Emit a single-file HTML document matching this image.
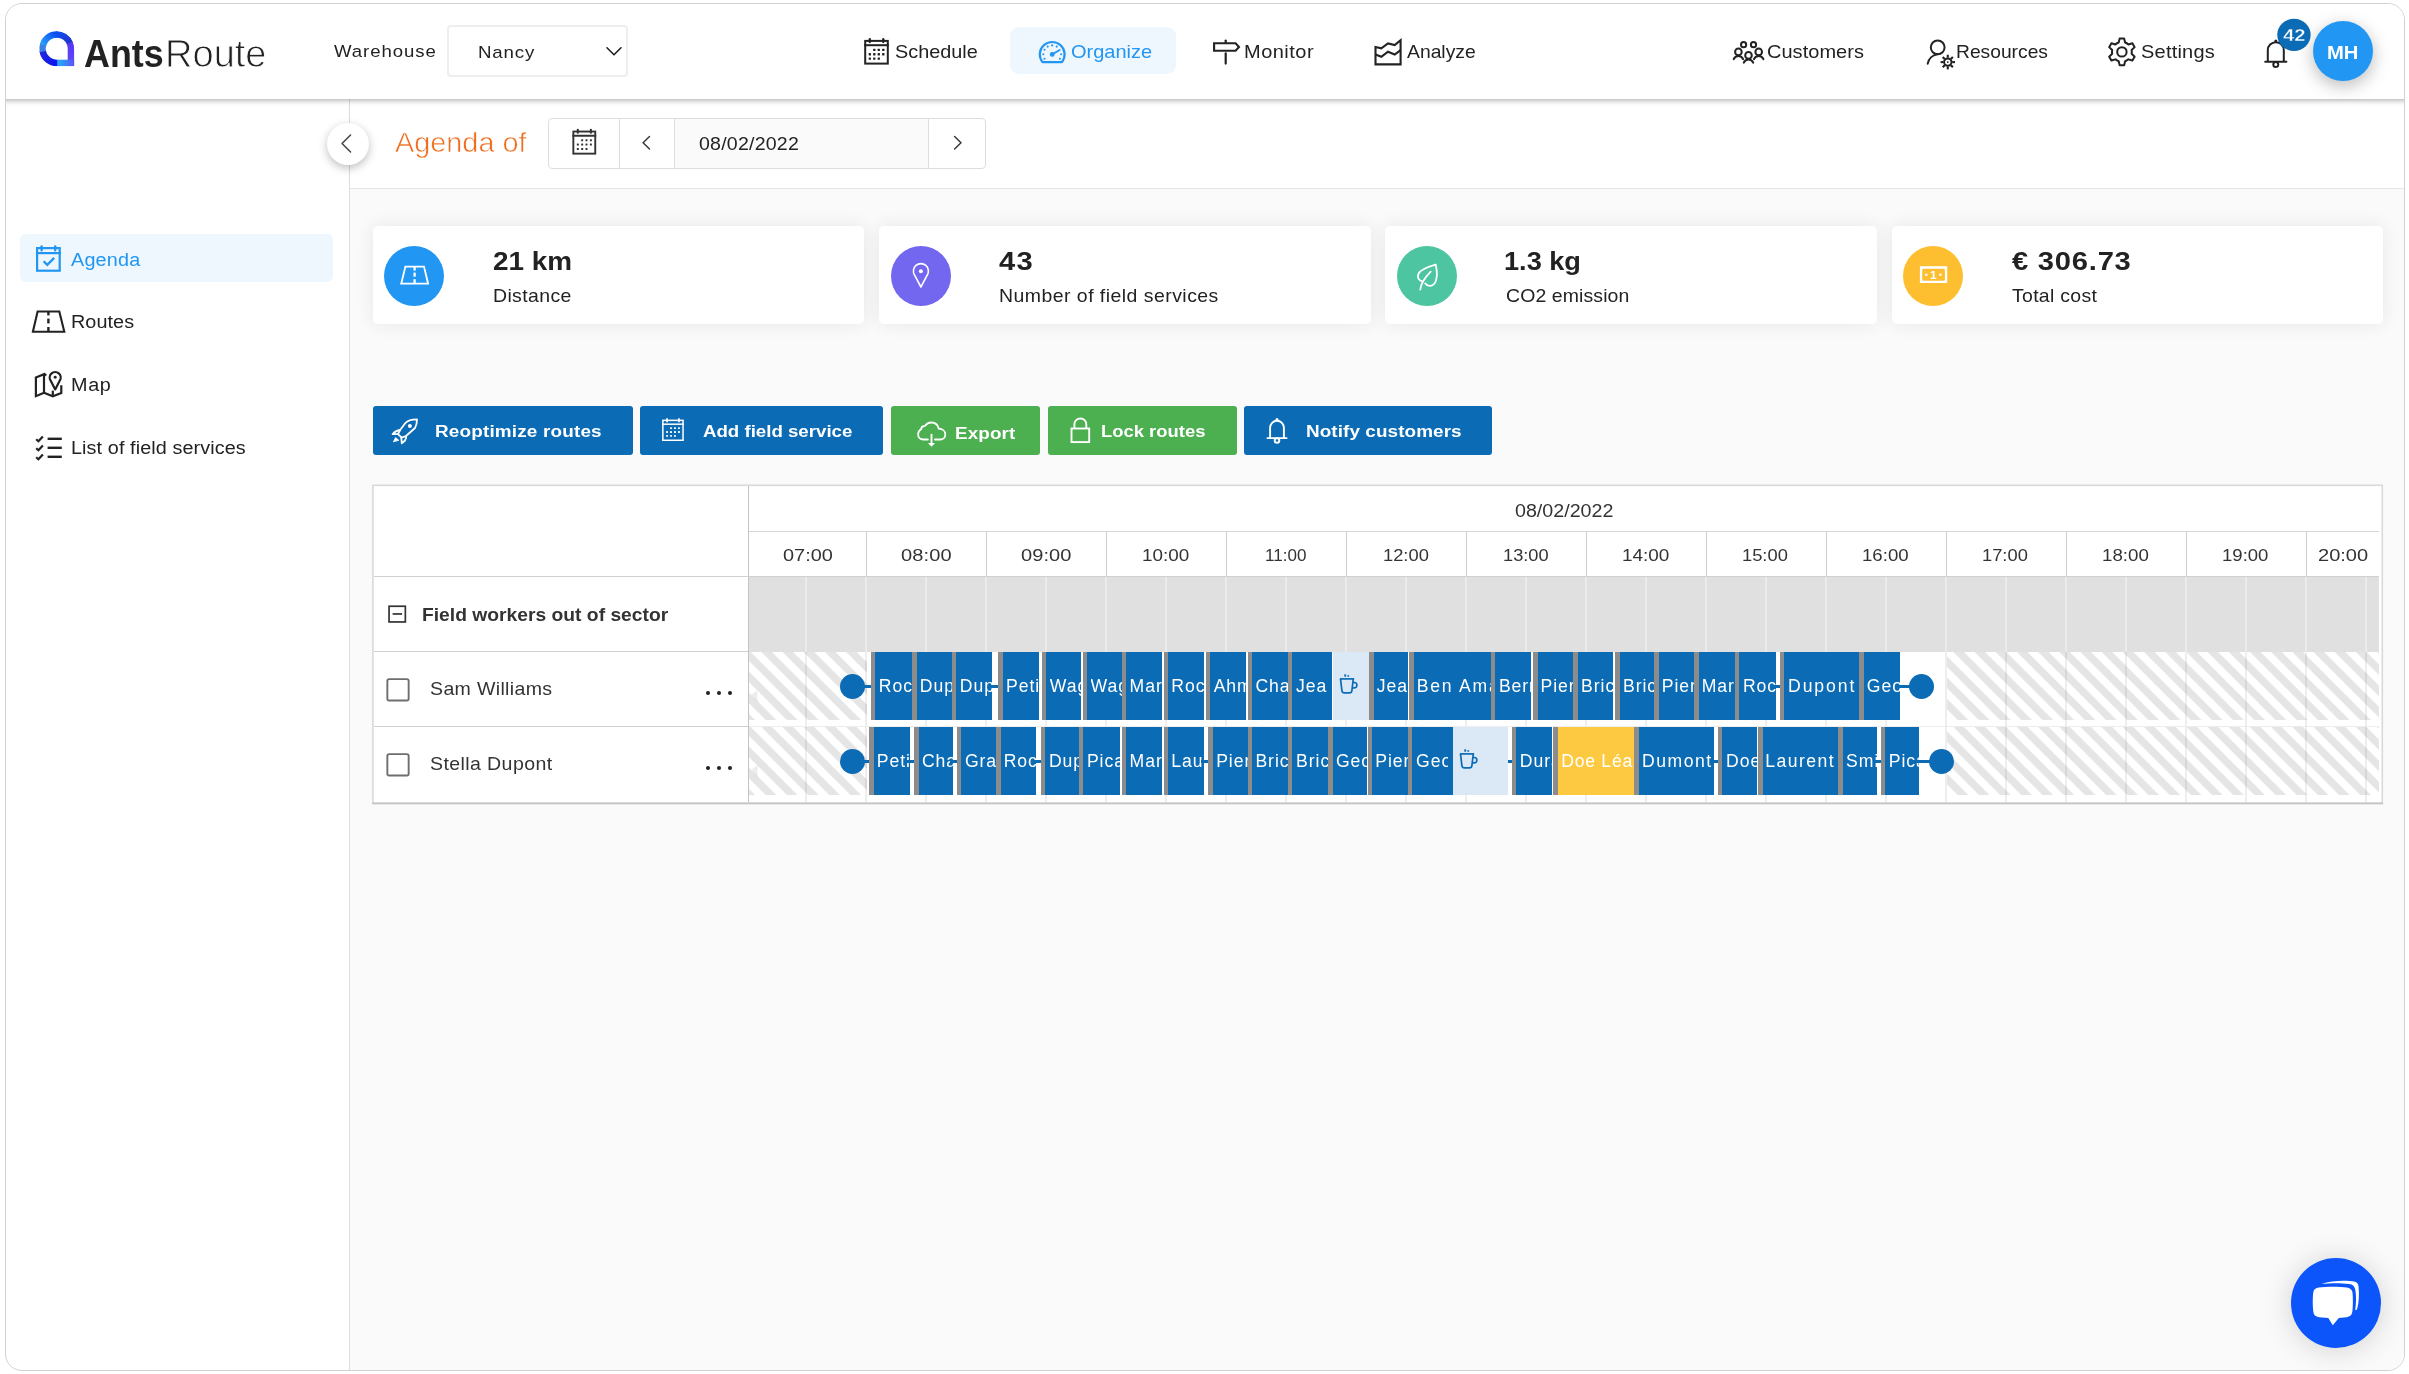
<!DOCTYPE html>
<html lang="en"><head><meta charset="utf-8"><title>AntsRoute - Agenda</title>
<style>
html,body{margin:0;padding:0;background:#fff;}
body{width:2409px;height:1374px;position:relative;overflow:hidden;font-family:"Liberation Sans",sans-serif;color:#222;}
.t{position:absolute;white-space:nowrap;line-height:1;transform-origin:0 50%;}
svg{position:absolute;overflow:visible;}

.frame{position:absolute;left:5px;top:3px;width:2400px;height:1368px;box-sizing:border-box;border:1px solid #d2d2d2;border-radius:17px;overflow:hidden;background:#fff;}
.abs{position:absolute;}
.frame>.abs{will-change:transform;}
header.w,nav,aside,main,section,ul,li{display:contents;}
button{border:0;padding:0;margin:0;background:none;font:inherit;color:inherit;display:block;}
a{color:inherit;text-decoration:none;display:block;}
.t{margin:0;font-weight:400;}
.thin1{-webkit-text-stroke:.9px #fff;}
.thin2{-webkit-text-stroke:.6px #fff;}
.semi{-webkit-text-stroke:.4px #0b6bb5;}
.task{position:absolute;top:0;height:68px;overflow:hidden;box-sizing:border-box;background:linear-gradient(90deg,#8c8c8c 4.5px,#0b6bb5 4.5px);color:#fff;font-size:17.6px;letter-spacing:.95px;line-height:69.8px;white-space:nowrap;padding:0 0 0 7.8px;}
.task b{display:block;overflow:hidden;font-weight:400;height:68px;}
.task.y{background:linear-gradient(90deg,#8c8c8c 4.5px,#fcc940 4.5px);}
.brk{position:absolute;top:0;height:68px;background:#dbe8f5;}
.lnk{position:absolute;height:3px;background:#0b6bb5;top:33.4px;}
.dot{position:absolute;width:25px;height:25px;border-radius:50%;background:#0b6bb5;top:21.8px;}
.card{background:#fff;border-radius:5px;box-shadow:0 0 18px rgba(40,40,70,.09);}
.circ{position:absolute;left:11.8px;top:19.6px;width:60px;height:60px;border-radius:50%;}

</style></head><body>
<div class="frame"><div class="abs" style="left:-6px;top:-4px;width:2409px;height:1374px;">
<div style="position:absolute;left:349px;top:188px;width:2056px;height:1190px;background:#fafafa;"></div>
<div style="position:absolute;left:348.7px;top:99px;width:1.5px;height:1280px;background:#dcdcdc;"></div>
<div style="position:absolute;left:350px;top:187.5px;width:2056px;height:1px;background:#e6e6e6;"></div>
<header style="position:absolute;left:0px;top:0px;width:2409px;height:99px;background:#fff;box-shadow:0 1px 6px rgba(0,0,0,.36);">
<a title="AntsRoute" style="position:absolute;left:36px;top:28px;width:232px;height:44px;">
<svg style="left:0px;top:0px" width="42" height="42" viewBox="36 28 42 42" ><defs>
<linearGradient id="lg1" gradientUnits="userSpaceOnUse" x1="42" y1="50" x2="57" y2="34"><stop offset="0" stop-color="#2fb4f9"/><stop offset="1" stop-color="#0b4cf0"/></linearGradient>
<linearGradient id="lg2" gradientUnits="userSpaceOnUse" x1="57" y1="34" x2="70" y2="43"><stop offset="0" stop-color="#0d50f4"/><stop offset="1" stop-color="#2234c6"/></linearGradient>
<linearGradient id="lg3" gradientUnits="userSpaceOnUse" x1="71" y1="42" x2="71" y2="66"><stop offset="0" stop-color="#5a33f6"/><stop offset="1" stop-color="#5c4df7"/></linearGradient>
<linearGradient id="lg4" gradientUnits="userSpaceOnUse" x1="74" y1="63" x2="60" y2="63"><stop offset="0" stop-color="#5a52f7"/><stop offset="1" stop-color="#2aa4f9"/></linearGradient>
<linearGradient id="lg5" gradientUnits="userSpaceOnUse" x1="60" y1="63" x2="43" y2="53"><stop offset="0" stop-color="#0812f2"/><stop offset="1" stop-color="#2026e0"/></linearGradient>
</defs><path d="M58.18 62.82 A14.2 14.2 0 0 1 42.64 50.68" fill="none" stroke="url(#lg5)" stroke-width="6.4"/><path d="M42.81 51.65 A14.2 14.2 0 0 1 43.36 43.84" fill="none" stroke="#3c7fe2" stroke-width="6.4"/><path d="M43.05 44.79 A14.2 14.2 0 0 1 57.20 34.51" fill="none" stroke="url(#lg1)" stroke-width="6.4"/><path d="M56.20 34.51 A14.2 14.2 0 0 1 69.87 43.38" fill="none" stroke="url(#lg2)" stroke-width="6.4"/><path d="M69.67 42.92 A14.2 14.2 0 0 1 70.90 50.70 L70.90 66.1" fill="none" stroke="url(#lg3)" stroke-width="6.4"/><path d="M74.1 62.90 L57.20 62.90" fill="none" stroke="url(#lg4)" stroke-width="6.4"/></svg>
<b class="t" style="left:48.20px;top:4px;font-size:38.4px;line-height:43px;transform:scaleX(0.9338);font-weight:700;">Ants</b>
<span class="t thin1" style="left:128.83px;top:4px;font-size:38.4px;line-height:43px;transform:scaleX(0.9909);">Route</span>
</a>
<label class="t" style="left:333.90px;top:42px;font-size:16.9px;line-height:19px;letter-spacing:0.853px;transform:scaleX(1.1000);">Warehouse</label>
<div role="combobox" style="position:absolute;left:447px;top:25px;width:181px;height:52px;box-sizing:border-box;border:2px solid #eeeeee;border-radius:4px;background:#fff;">
<span class="t" style="left:28.60px;top:16px;font-size:17px;line-height:19px;letter-spacing:0.760px;transform:scaleX(1.1000);">Nancy</span>
<svg style="left:154px;top:17px" width="22" height="14" viewBox="603 44 22 14" ><path d="M607.0 47.8 L614 54.8 L621.0 47.8" fill="none" stroke="#222" stroke-width="1.6" stroke-linecap="round" stroke-linejoin="round"/></svg>
</div>
<nav>
<a style="position:absolute;left:850px;top:27px;width:142px;height:47.4px;">
<svg style="left:12px;top:8px" width="30" height="32" viewBox="862 35 30 32" ><rect x="865.2" y="40.9" width="22.59999999999991" height="22.699999999999996" fill="none" stroke="#222" stroke-width="2.0" /><line x1="864.2" y1="45.210499999999996" x2="888.8" y2="45.210499999999996" fill="none" stroke="#222" stroke-width="2.0" /><line x1="869.8088" y1="39.159" x2="869.8088" y2="42.123" fill="none" stroke="#222" stroke-width="2.3" stroke-linecap="round"/><line x1="883.2896" y1="39.159" x2="883.2896" y2="42.123" fill="none" stroke="#222" stroke-width="2.3" stroke-linecap="round"/><rect x="873.14" y="48.63" width="2.3" height="2.3" rx="0.5" fill="#222"/><rect x="877.64" y="48.63" width="2.3" height="2.3" rx="0.5" fill="#222"/><rect x="882.14" y="48.63" width="2.3" height="2.3" rx="0.5" fill="#222"/><rect x="868.66" y="53.08" width="2.3" height="2.3" rx="0.5" fill="#222"/><rect x="873.14" y="53.08" width="2.3" height="2.3" rx="0.5" fill="#222"/><rect x="877.64" y="53.08" width="2.3" height="2.3" rx="0.5" fill="#222"/><rect x="882.14" y="53.08" width="2.3" height="2.3" rx="0.5" fill="#222"/><rect x="868.66" y="57.57" width="2.3" height="2.3" rx="0.5" fill="#222"/><rect x="873.14" y="57.57" width="2.3" height="2.3" rx="0.5" fill="#222"/><rect x="877.64" y="57.57" width="2.3" height="2.3" rx="0.5" fill="#222"/></svg>
<span class="t" style="left:45.30px;top:15px;font-size:18.2px;line-height:20px;transform:scaleX(1.0908);">Schedule</span>
</a>
<a class="on" style="position:absolute;left:1010.2px;top:27px;width:165.6px;height:47.4px;background:#eef6fe;border-radius:9px;">
<svg style="left:25.8px;top:11px" width="32" height="28" viewBox="1036 38 32 28" ><path d="M1042.5 62.1 A12.4 12.4 0 1 1 1061.9 62.1 Z" fill="none" stroke="#2196f3" stroke-width="2.2" stroke-linejoin="round"/><circle cx="1043.3" cy="54.3" r="1.05" fill="#2196f3"/><circle cx="1044.5" cy="49.8" r="1.05" fill="#2196f3"/><circle cx="1047.7" cy="46.6" r="1.05" fill="#2196f3"/><circle cx="1052.2" cy="45.4" r="1.05" fill="#2196f3"/><circle cx="1056.7" cy="46.6" r="1.05" fill="#2196f3"/><circle cx="1061.1" cy="54.3" r="1.05" fill="#2196f3"/><circle cx="1044.5" cy="58.7" r="1.05" fill="#2196f3"/><circle cx="1059.9" cy="58.7" r="1.05" fill="#2196f3"/><circle cx="1052.2" cy="54.4" r="2.4" fill="#2196f3"/><line x1="1052.2" y1="54.4" x2="1059.7" y2="50" fill="none" stroke="#2196f3" stroke-width="1.8" stroke-linecap="round"/></svg>
<span class="t" style="left:60.60px;top:15px;font-size:18.2px;line-height:20px;transform:scaleX(1.1000);color:#2196f3;">Organize</span>
</a>
<a style="position:absolute;left:1198px;top:27px;width:130px;height:47.4px;">
<svg style="left:12px;top:10px" width="34" height="30" viewBox="1210 37 34 30" ><path d="M1214.1 43.2 H1235.6 L1239 47 L1235.6 50.8 H1214.1 Z" fill="none" stroke="#222" stroke-width="2.1" stroke-linejoin="miter"/><line x1="1225.7" y1="40.6" x2="1225.7" y2="42.5" fill="none" stroke="#222" stroke-width="2.2" stroke-linecap="round"/><line x1="1225.7" y1="53.4" x2="1225.7" y2="63.6" fill="none" stroke="#222" stroke-width="2.2" stroke-linecap="round"/></svg>
<span class="t" style="left:46.20px;top:15px;font-size:18.2px;line-height:20px;letter-spacing:0.432px;transform:scaleX(1.1000);">Monitor</span>
</a>
<a style="position:absolute;left:1360px;top:27px;width:130px;height:47.4px;">
<svg style="left:12px;top:9px" width="33" height="32" viewBox="1372 36 33 32" ><path d="M1375.5 64.4 H1400.6 V40.3 L1394.7 45 L1388 43.5 L1381.3 48.3 L1375.5 47 Z" fill="none" stroke="#222" stroke-width="2.1" /><path d="M1375.5 54.5 L1381.3 56.8 L1388 51.7 L1394.7 54.5 L1400.6 50.2" fill="none" stroke="#222" stroke-width="2.1" /></svg>
<span class="t" style="left:46.80px;top:15px;font-size:18.2px;line-height:20px;transform:scaleX(1.0621);">Analyze</span>
</a>
</nav>
<nav>
<a style="position:absolute;left:1720px;top:27px;width:158px;height:47.4px;">
<svg style="left:10px;top:12px" width="38" height="27" viewBox="1730 39 38 27" ><circle cx="1743.6" cy="44.7" r="2.6" fill="none" stroke="#222" stroke-width="2.0" stroke-linecap="round"/><circle cx="1753.5" cy="44.7" r="2.6" fill="none" stroke="#222" stroke-width="2.0" stroke-linecap="round"/><circle cx="1738.4" cy="51.9" r="3.3" fill="none" stroke="#222" stroke-width="2.0" stroke-linecap="round"/><path d="M1733.7 59.199999999999996 A5 5 0 0 1 1743.1000000000001 59.199999999999996" fill="none" stroke="#222" stroke-width="2.0" stroke-linecap="round"/><circle cx="1748.5" cy="55.4" r="3.3" fill="none" stroke="#222" stroke-width="2.0" stroke-linecap="round"/><path d="M1743.8 62.699999999999996 A5 5 0 0 1 1753.2 62.699999999999996" fill="none" stroke="#222" stroke-width="2.0" stroke-linecap="round"/><circle cx="1758.7" cy="51.9" r="3.3" fill="none" stroke="#222" stroke-width="2.0" stroke-linecap="round"/><path d="M1754.0 59.199999999999996 A5 5 0 0 1 1763.4 59.199999999999996" fill="none" stroke="#222" stroke-width="2.0" stroke-linecap="round"/></svg>
<span class="t" style="left:47.30px;top:15px;font-size:18.2px;line-height:20px;letter-spacing:0.021px;transform:scaleX(1.1000);">Customers</span>
</a>
<a style="position:absolute;left:1912px;top:27px;width:150px;height:47.4px;">
<svg style="left:12px;top:11px" width="34" height="34" viewBox="1924 38 34 34" ><circle cx="1937.7" cy="47.3" r="6.9" fill="none" stroke="#222" stroke-width="2.0" stroke-linecap="round"/><path d="M1927.7 63.7 A11.5 11.5 0 0 1 1937.4 54.3" fill="none" stroke="#222" stroke-width="2.0" stroke-linecap="round"/><circle cx="1947.8" cy="62.1" r="3.7" fill="none" stroke="#222" stroke-width="2.0" /><circle cx="1947.8" cy="62.1" r="0.95" fill="#222"/><line x1="1952.20" y1="62.10" x2="1955.00" y2="62.10" fill="none" stroke="#222" stroke-width="2.1" /><line x1="1950.91" y1="65.21" x2="1952.89" y2="67.26" fill="none" stroke="#222" stroke-width="2.1" /><line x1="1947.80" y1="66.50" x2="1947.80" y2="69.40" fill="none" stroke="#222" stroke-width="2.1" /><line x1="1944.69" y1="65.21" x2="1942.71" y2="67.26" fill="none" stroke="#222" stroke-width="2.1" /><line x1="1943.40" y1="62.10" x2="1940.60" y2="62.10" fill="none" stroke="#222" stroke-width="2.1" /><line x1="1944.69" y1="58.99" x2="1942.71" y2="56.94" fill="none" stroke="#222" stroke-width="2.1" /><line x1="1947.80" y1="57.70" x2="1947.80" y2="54.80" fill="none" stroke="#222" stroke-width="2.1" /><line x1="1950.91" y1="58.99" x2="1952.89" y2="56.94" fill="none" stroke="#222" stroke-width="2.1" /></svg>
<span class="t" style="left:44.34px;top:15px;font-size:18.2px;line-height:20px;transform:scaleX(1.0578);">Resources</span>
</a>
<a style="position:absolute;left:2094px;top:27px;width:134px;height:47.4px;">
<svg style="left:11px;top:8px" width="34" height="34" viewBox="2105 35 34 34" ><path d="M2118.68 42.54 L2119.66 38.49 L2124.14 38.49 L2125.12 42.54 A9.9 9.9 0 0 1 2128.39 44.43 L2132.39 43.25 L2134.64 47.14 L2131.62 50.01 A9.9 9.9 0 0 1 2131.62 53.79 L2134.64 56.66 L2132.39 60.55 L2128.39 59.37 A9.9 9.9 0 0 1 2125.12 61.26 L2124.14 65.31 L2119.66 65.31 L2118.68 61.26 A9.9 9.9 0 0 1 2115.41 59.37 L2111.41 60.55 L2109.16 56.66 L2112.18 53.79 A9.9 9.9 0 0 1 2112.18 50.01 L2109.16 47.14 L2111.41 43.25 L2115.41 44.43 A9.9 9.9 0 0 1 2118.68 42.54 Z" fill="none" stroke="#222" stroke-width="2.0" stroke-linejoin="round"/><circle cx="2121.9" cy="51.9" r="4.7" fill="none" stroke="#222" stroke-width="2.0" /></svg>
<span class="t" style="left:46.80px;top:15px;font-size:18.2px;line-height:20px;letter-spacing:0.197px;transform:scaleX(1.1000);">Settings</span>
</a>
</nav>
<button title="Account" style="position:absolute;left:2313px;top:21px;width:60px;height:60px;border-radius:50%;background:#2196f3;box-shadow:0 5px 17px rgba(0,0,0,.27);">
<span class="t" style="left:14.46px;top:22px;font-size:17.8px;line-height:20px;transform:scaleX(1.1390);font-weight:700;color:#fff;">MH</span>
</button>
<button title="Notifications" style="position:absolute;left:2258px;top:16px;width:54px;height:56px;">
<svg style="left:2px;top:20px" width="32" height="34" viewBox="2260 36 32 34" ><path d="M2267.8 61.8 V50.2 A8.0 8.0 0 0 1 2283.8 50.2 V61.8" fill="none" stroke="#222" stroke-width="2.0" /><line x1="2265.2000000000003" y1="61.8" x2="2286.4" y2="61.8" fill="none" stroke="#222" stroke-width="2.0" stroke-linecap="round"/><circle cx="2275.8" cy="64.39999999999999" r="2.5" fill="none" stroke="#222" stroke-width="2.0" /><circle cx="2275.8" cy="41.0" r="1.5" fill="#222"/></svg>
<svg style="left:18px;top:1px" width="36" height="36" viewBox="2276 17 36 36" ><ellipse cx="2293.95" cy="34.85" rx="16.7" ry="16.1" fill="#0b6bb5"/></svg>
<span class="t semi" style="left:24.80px;top:10px;font-size:17px;line-height:19px;transform:scaleX(1.1921);font-weight:700;color:#fff;">42</span>
</button>
</header>
<section>
<button title="Collapse menu" style="position:absolute;left:327px;top:122.5px;width:42px;height:42px;border-radius:50%;background:#fff;box-shadow:0 3px 10px rgba(0,0,0,.26);">
<svg style="left:11px;top:9.5px" width="18" height="24" viewBox="338 132 18 24" ><path d="M350.55 135.0 L342.05 143.5 L350.55 152.0" fill="none" stroke="#444" stroke-width="1.5" stroke-linecap="round" stroke-linejoin="round"/></svg>
</button>
<h1 class="t thin2" style="left:394.80px;top:127px;font-size:27.1px;line-height:31px;transform:scaleX(1.0644);color:#ee6c1c;">Agenda of</h1>
<div class="datepick" style="position:absolute;left:548.3px;top:118px;width:437.4px;height:50.6px;box-sizing:border-box;border:1px solid #dedede;border-radius:4px;background:#fff;overflow:hidden;">
<div class="abs" style="left:69.7px;top:0;width:1px;height:50px;background:#dedede"></div><div class="abs" style="left:124.9px;top:0;width:255.3px;height:50px;background:#fafafa;border-left:1px solid #dedede;border-right:1px solid #dedede;box-sizing:border-box"></div>
<button title="Calendar" style="position:absolute;left:0px;top:0px;width:70px;height:48.6px;">
<svg style="left:20.7px;top:7px" width="29" height="31" viewBox="570 126 29 31" ><rect x="573.35" y="131.54999999999998" width="21.90000000000007" height="22.1" fill="none" stroke="#333" stroke-width="1.9" /><line x1="572.4" y1="135.76" x2="596.2" y2="135.76" fill="none" stroke="#333" stroke-width="1.9" /><line x1="577.8264" y1="129.88" x2="577.8264" y2="132.76" fill="none" stroke="#333" stroke-width="2.1849999999999996" stroke-linecap="round"/><line x1="590.8688000000001" y1="129.88" x2="590.8688000000001" y2="132.76" fill="none" stroke="#333" stroke-width="2.1849999999999996" stroke-linecap="round"/><rect x="581.16" y="139.20" width="2.0" height="2.0" rx="0.5" fill="#333"/><rect x="585.51" y="139.20" width="2.0" height="2.0" rx="0.5" fill="#333"/><rect x="589.87" y="139.20" width="2.0" height="2.0" rx="0.5" fill="#333"/><rect x="576.83" y="143.52" width="2.0" height="2.0" rx="0.5" fill="#333"/><rect x="581.16" y="143.52" width="2.0" height="2.0" rx="0.5" fill="#333"/><rect x="585.51" y="143.52" width="2.0" height="2.0" rx="0.5" fill="#333"/><rect x="589.87" y="143.52" width="2.0" height="2.0" rx="0.5" fill="#333"/><rect x="576.83" y="147.89" width="2.0" height="2.0" rx="0.5" fill="#333"/><rect x="581.16" y="147.89" width="2.0" height="2.0" rx="0.5" fill="#333"/><rect x="585.51" y="147.89" width="2.0" height="2.0" rx="0.5" fill="#333"/></svg>
</button>
<button title="Previous day" style="position:absolute;left:71px;top:0px;width:54px;height:48.6px;">
<svg style="left:17.7px;top:14px" width="16" height="20" viewBox="638 133 16 20" ><path d="M649.5 136.60000000000002 L643.0999999999999 142.8 L649.5 149.0" fill="none" stroke="#333" stroke-width="1.4" stroke-linecap="round" stroke-linejoin="round"/></svg>
</button>
<span class="t" style="left:150.10px;top:15px;font-size:17.8px;line-height:20px;letter-spacing:0.190px;transform:scaleX(1.1000);">08/02/2022</span>
<button title="Next day" style="position:absolute;left:380.7px;top:0px;width:54px;height:48.6px;">
<svg style="left:20px;top:14px" width="16" height="20" viewBox="950 133 16 20" ><path d="M954.5999999999999 136.60000000000002 L961.0 142.8 L954.5999999999999 149.0" fill="none" stroke="#333" stroke-width="1.4" stroke-linecap="round" stroke-linejoin="round"/></svg>
</button>
</div>
</section>
<aside>
<nav>
<a class="on" style="position:absolute;left:20px;top:234px;width:313px;height:48px;background:#eef6fe;border-radius:6px;">
<svg style="left:13px;top:9px" width="31" height="31" viewBox="33 243 31 31" ><rect x="37.1" y="248.1" width="22.6" height="22.6" fill="none" stroke="#2196f3" stroke-width="2.2" /><line x1="36" y1="253.1" x2="60.8" y2="253.1" fill="none" stroke="#2196f3" stroke-width="2.2" /><line x1="41.6" y1="246.3" x2="41.6" y2="250.4" fill="none" stroke="#2196f3" stroke-width="2.3" stroke-linecap="round"/><line x1="55.2" y1="246.3" x2="55.2" y2="250.4" fill="none" stroke="#2196f3" stroke-width="2.3" stroke-linecap="round"/><path d="M43.6 261.2 L47.3 264.8 L54.2 257.9" fill="none" stroke="#2196f3" stroke-width="2.3" /></svg>
<span class="t" style="left:51.00px;top:16px;font-size:18px;line-height:20px;letter-spacing:0.172px;transform:scaleX(1.1000);color:#2196f3;">Agenda</span>
</a>
<a style="position:absolute;left:20px;top:297px;width:313px;height:48px;">
<svg style="left:9px;top:11px" width="40" height="27" viewBox="29 308 40 27" ><path d="M37.6 311.5 H59.3 L64.3 331.8 H32.9 Z" fill="none" stroke="#222" stroke-width="2.1" /><line x1="48.4" y1="311.5" x2="48.4" y2="315.4" fill="none" stroke="#222" stroke-width="2.4" /><line x1="48.4" y1="318.6" x2="48.4" y2="323.4" fill="none" stroke="#222" stroke-width="2.4" /><line x1="48.4" y1="327" x2="48.4" y2="331.8" fill="none" stroke="#222" stroke-width="2.4" /></svg>
<span class="t" style="left:50.50px;top:15px;font-size:18px;line-height:20px;letter-spacing:0.066px;transform:scaleX(1.1000);">Routes</span>
</a>
<a style="position:absolute;left:20px;top:360px;width:313px;height:48px;">
<svg style="left:12px;top:8px" width="34" height="32" viewBox="32 368 34 32" ><path d="M35.9 377.4 L44 374.2 V392.8 L35.9 396.2 Z" fill="none" stroke="#222" stroke-width="2.2" stroke-linejoin="miter"/><path d="M44 374.2 L46.4 375.1" fill="none" stroke="#222" stroke-width="2.2" stroke-linejoin="miter"/><path d="M44 392.8 L52.8 396.3 L61.3 392.9 V385.2" fill="none" stroke="#222" stroke-width="2.2" stroke-linejoin="miter"/><path d="M52.8 390.6 V396.3" fill="none" stroke="#222" stroke-width="2.2" stroke-linejoin="miter"/><path d="M55.2 389.4 L50.6 380.6 A5.5 5.5 0 1 1 59.8 380.6 Z" fill="none" stroke="#222" stroke-width="2.2" stroke-linejoin="round"/><circle cx="55.2" cy="377.3" r="1.45" fill="#222"/></svg>
<span class="t" style="left:50.50px;top:15px;font-size:18px;line-height:20px;letter-spacing:0.588px;transform:scaleX(1.1000);">Map</span>
</a>
<a style="position:absolute;left:20px;top:423px;width:313px;height:48px;">
<svg style="left:13px;top:10px" width="32" height="30" viewBox="33 433 32 30" ><line x1="47.6" y1="438.8" x2="61.8" y2="438.8" fill="none" stroke="#222" stroke-width="2.4" /><path d="M36.2 439.3 L38.4 441.3 L42.9 436.5" fill="none" stroke="#222" stroke-width="2.2" /><line x1="47.6" y1="447.8" x2="61.8" y2="447.8" fill="none" stroke="#222" stroke-width="2.4" /><path d="M36.2 448.3 L38.4 450.3 L42.9 445.5" fill="none" stroke="#222" stroke-width="2.2" /><line x1="47.6" y1="456.8" x2="61.8" y2="456.8" fill="none" stroke="#222" stroke-width="2.4" /><path d="M36.2 457.3 L38.4 459.3 L42.9 454.5" fill="none" stroke="#222" stroke-width="2.2" /></svg>
<span class="t" style="left:50.50px;top:15px;font-size:18px;line-height:20px;letter-spacing:0.084px;transform:scaleX(1.1000);">List of field services</span>
</a>
</nav>
</aside>
<section>
<div class="card" style="position:absolute;left:372.5px;top:226px;width:491.5px;height:98px;">
<div class="circ" style="background:#2196f3"></div>
<svg style="left:25.5px;top:36px" width="34" height="26" viewBox="398 262 34 26" ><path d="M405.4 266.6 H424 L428.1 283.7 H401.2 Z" fill="none" stroke="#fff" stroke-width="1.8" /><line x1="414.6" y1="266.6" x2="414.6" y2="270.6" fill="none" stroke="#fff" stroke-width="2.3" /><line x1="414.6" y1="272.6" x2="414.6" y2="276.7" fill="none" stroke="#fff" stroke-width="2.3" /><line x1="414.6" y1="279.2" x2="414.6" y2="283.7" fill="none" stroke="#fff" stroke-width="2.3" /></svg>
<strong class="t" style="left:120.40px;top:20px;font-size:26.5px;line-height:30px;transform:scaleX(1.0520);font-weight:700;">21 km</strong>
<span class="t" style="left:120.30px;top:60px;font-size:17.7px;line-height:20px;letter-spacing:0.341px;transform:scaleX(1.1000);">Distance</span>
</div>
<div class="card" style="position:absolute;left:879.2px;top:226px;width:491.5px;height:98px;">
<div class="circ" style="background:#7367f0"></div>
<svg style="left:30.8px;top:34px" width="22" height="30" viewBox="910 260 22 30" ><path d="M920.9 287 L914.6 275.2 A7.5 7.5 0 1 1 927.2 275.2 Z" fill="none" stroke="#fff" stroke-width="1.6" stroke-linejoin="round"/><circle cx="920.9" cy="271.2" r="2" fill="#fff"/></svg>
<strong class="t" style="left:120.30px;top:20px;font-size:26.5px;line-height:30px;letter-spacing:1.262px;transform:scaleX(1.1000);font-weight:700;">43</strong>
<span class="t" style="left:119.90px;top:60px;font-size:17.7px;line-height:20px;letter-spacing:0.421px;transform:scaleX(1.1000);">Number of field services</span>
</div>
<div class="card" style="position:absolute;left:1385px;top:226px;width:491.5px;height:98px;">
<div class="circ" style="background:#4dc5a0"></div>
<svg style="left:29px;top:35px" width="26" height="31" viewBox="1414 261 26 31" ><path d="M1435.6 264.6 C1429 266.5 1421 269 1418.6 273.5 C1416.5 277.5 1419 280.5 1422.3 281.4" fill="none" stroke="#fff" stroke-width="1.8" stroke-linecap="round"/><path d="M1435.6 264.6 C1437 270 1437.3 277 1435.6 281.5 C1433.5 286.5 1428.5 287.5 1425.2 283.4" fill="none" stroke="#fff" stroke-width="1.8" stroke-linecap="round"/><path d="M1430.7 271.7 C1426 276.5 1420.8 283.5 1420.3 289.6" fill="none" stroke="#fff" stroke-width="1.8" stroke-linecap="round"/></svg>
<strong class="t" style="left:119.48px;top:20px;font-size:26.5px;line-height:30px;transform:scaleX(1.0241);font-weight:700;">1.3 kg</strong>
<span class="t" style="left:120.60px;top:60px;font-size:17.7px;line-height:20px;letter-spacing:0.094px;transform:scaleX(1.1000);">CO2 emission</span>
</div>
<div class="card" style="position:absolute;left:1891.7px;top:226px;width:491.5px;height:98px;">
<div class="circ" style="background:#fdbe30"></div>
<svg style="left:26.3px;top:38px" width="32" height="22" viewBox="1918 264 32 22" ><rect x="1919.9" y="266.2" width="27.3" height="16.8" fill="#fff"/><path d="M1923.2 268.8 H1943.9 L1944.9 269.8 V279.8 L1943.9 280.8 H1923.2 L1922.2 279.8 V269.8 Z" fill="#fdbe30"/><circle cx="1926.3" cy="274.7" r="1.3" fill="#fff"/><circle cx="1940.4" cy="274.7" r="1.3" fill="#fff"/><text x="1933.4" y="279.2" font-family="Liberation Sans, sans-serif" font-weight="700" font-size="11.8" fill="#fff" text-anchor="middle">1</text></svg>
<strong class="t" style="left:119.90px;top:20px;font-size:26.5px;line-height:30px;letter-spacing:0.694px;transform:scaleX(1.1000);font-weight:700;">€ 306.73</strong>
<span class="t" style="left:119.90px;top:60px;font-size:17.7px;line-height:20px;letter-spacing:0.275px;transform:scaleX(1.1000);">Total cost</span>
</div>
</section>
<section>
<button style="position:absolute;left:372.5px;top:406px;width:260.2px;height:48.5px;border-radius:3px;background:#0b6bb5;">
<svg style="left:17.5px;top:10px" width="30" height="30" viewBox="390 416 30 30" ><path d="M417 419.3 C412 419.3 408 420 405.4 423 L400.1 430 L398 434.2 L401.7 437.6 L406 436 L415 428 C416.6 425.5 417 422.5 417 419.3 Z" fill="none" stroke="#fff" stroke-width="1.8" stroke-linejoin="round" stroke-linecap="round"/><circle cx="409.9" cy="425.9" r="2" fill="#fff"/><path d="M400.1 430 C396.5 430.5 394.3 432 392.6 434.2 L398 434.2" fill="none" stroke="#fff" stroke-width="1.8" stroke-linejoin="round" stroke-linecap="round"/><path d="M406.2 436.3 C406.4 439.5 404.5 441.6 401.8 443.2 L401.2 437.4" fill="none" stroke="#fff" stroke-width="1.8" stroke-linejoin="round" stroke-linecap="round"/><path d="M395.6 437.6 L393.4 441.8 L398.8 440.3 Z" fill="#fff" stroke="#fff" stroke-width="0.8" stroke-linejoin="round"/></svg>
<span class="t" style="left:62.40px;top:15px;font-size:17.2px;line-height:20px;letter-spacing:0.155px;transform:scaleX(1.1000);font-weight:700;color:#fff;">Reoptimize routes</span>
</button>
<button style="position:absolute;left:640.2px;top:406px;width:242.8px;height:48.5px;border-radius:3px;background:#0b6bb5;">
<svg style="left:19.8px;top:9px" width="27" height="29" viewBox="660 415 27 29" ><rect x="662.85" y="420.35" width="20.199999999999932" height="19.899999999999977" fill="none" stroke="#fff" stroke-width="1.5" /><line x1="662.1" y1="424.201" x2="683.8" y2="424.201" fill="none" stroke="#fff" stroke-width="1.5" /><line x1="667.0476" y1="418.958" x2="667.0476" y2="421.526" fill="none" stroke="#fff" stroke-width="1.7249999999999999" stroke-linecap="round"/><line x1="678.9392" y1="418.958" x2="678.9392" y2="421.526" fill="none" stroke="#fff" stroke-width="1.7249999999999999" stroke-linecap="round"/><rect x="670.05" y="427.21" width="1.9" height="1.9" rx="0.5" fill="#fff"/><rect x="674.02" y="427.21" width="1.9" height="1.9" rx="0.5" fill="#fff"/><rect x="677.99" y="427.21" width="1.9" height="1.9" rx="0.5" fill="#fff"/><rect x="666.10" y="431.06" width="1.9" height="1.9" rx="0.5" fill="#fff"/><rect x="670.05" y="431.06" width="1.9" height="1.9" rx="0.5" fill="#fff"/><rect x="674.02" y="431.06" width="1.9" height="1.9" rx="0.5" fill="#fff"/><rect x="677.99" y="431.06" width="1.9" height="1.9" rx="0.5" fill="#fff"/><rect x="666.10" y="434.96" width="1.9" height="1.9" rx="0.5" fill="#fff"/><rect x="670.05" y="434.96" width="1.9" height="1.9" rx="0.5" fill="#fff"/><rect x="674.02" y="434.96" width="1.9" height="1.9" rx="0.5" fill="#fff"/></svg>
<span class="t" style="left:63.00px;top:15px;font-size:17.2px;line-height:20px;transform:scaleX(1.0855);font-weight:700;color:#fff;">Add field service</span>
</button>
<button style="position:absolute;left:890.8px;top:406px;width:149.3px;height:48.5px;border-radius:3px;background:#4caf50;">
<svg style="left:24.2px;top:14px" width="33" height="29" viewBox="915 420 33 29" ><path d="M927.9 439.5 H923.3 C920.3 439.5 918.1 437.3 918.1 434.5 C918.1 431.8 919.6 430 921.1 429.2 C921.3 427.3 923 425.8 925.2 425.9 C926.3 423.8 928.6 422.5 931.5 422.5 C935 422.5 937.9 425 938.8 428.7 C942.4 428.9 945.3 431.2 945.3 434.3 C945.3 437.2 943.4 439.5 940.8 439.5 H934.9" fill="none" stroke="#fff" stroke-width="1.8" stroke-linecap="round" stroke-linejoin="round"/><line x1="931.5" y1="434.6" x2="931.5" y2="443.2" fill="none" stroke="#fff" stroke-width="1.9" stroke-linecap="round"/><path d="M927.9 443 H935.1 L931.5 446.8 Z" fill="#fff"/></svg>
<span class="t" style="left:64.50px;top:17px;font-size:17.2px;line-height:20px;letter-spacing:0.076px;transform:scaleX(1.1000);font-weight:700;color:#fff;">Export</span>
</button>
<button style="position:absolute;left:1047.5px;top:406px;width:189.5px;height:48.5px;border-radius:3px;background:#4caf50;">
<svg style="left:20.5px;top:9px" width="25" height="30" viewBox="1068 415 25 30" ><rect x="1071.5" y="428.5" width="17.7" height="13.6" fill="none" stroke="#fff" stroke-width="1.9" /><path d="M1074.4 428.4 V424.4 A5.95 5.95 0 0 1 1086.3 424.4 V428.4" fill="none" stroke="#fff" stroke-width="1.9" /></svg>
<span class="t" style="left:53.53px;top:15px;font-size:17.2px;line-height:20px;transform:scaleX(1.0714);font-weight:700;color:#fff;">Lock routes</span>
</button>
<button style="position:absolute;left:1243.9px;top:406px;width:248.6px;height:48.5px;border-radius:3px;background:#0b6bb5;">
<svg style="left:18.1px;top:8px" width="30" height="32" viewBox="1262 414 30 32" ><path d="M1270.1 438.1 V427.7 A6.9 6.9 0 0 1 1283.9 427.7 V438.1" fill="none" stroke="#fff" stroke-width="1.9" /><line x1="1267.4" y1="438.1" x2="1286.6" y2="438.1" fill="none" stroke="#fff" stroke-width="1.9" stroke-linecap="round"/><circle cx="1277" cy="440.50000000000006" r="2.3" fill="none" stroke="#fff" stroke-width="1.9" /><circle cx="1277" cy="419.6" r="1.5" fill="#fff"/></svg>
<span class="t" style="left:62.20px;top:15px;font-size:17.2px;line-height:20px;letter-spacing:0.072px;transform:scaleX(1.1000);font-weight:700;color:#fff;">Notify customers</span>
</button>
</section>
<section>
<svg style="left:370px;top:482px" width="2016" height="324" viewBox="370 482 2016 324" ><rect x="372.9" y="485.3" width="2009.4" height="318.1" fill="#fff" stroke="#d9d9d9" stroke-width="1.6"/><line x1="372.1" y1="803.4" x2="2383.1" y2="803.4" stroke="#c4c4c4" stroke-width="1.6"/></svg>
<div style="position:absolute;left:747.5px;top:486px;width:1.6px;height:316px;background:#c4c4c4;"></div>
<div style="position:absolute;left:749px;top:530.5px;width:1630px;height:1.3px;background:#d6d6d6;"></div>
<div style="position:absolute;left:374px;top:575.8px;width:2005px;height:1.4px;background:#d0d0d0;"></div>
<div style="position:absolute;left:374px;top:650.8px;width:374px;height:1.3px;background:#d0d0d0;"></div>
<div style="position:absolute;left:374px;top:725.8px;width:374px;height:1.3px;background:#d0d0d0;"></div>
<div style="position:absolute;left:749px;top:726px;width:1630px;height:1px;background:#ededed;"></div>
<div style="position:absolute;left:749px;top:577px;width:1630px;height:74.5px;background:#e0e0e0;"></div>
<div style="position:absolute;left:866px;top:531px;width:1px;height:45px;background:#cfcfcf;"></div>
<div style="position:absolute;left:986px;top:531px;width:1px;height:45px;background:#cfcfcf;"></div>
<div style="position:absolute;left:1106px;top:531px;width:1px;height:45px;background:#cfcfcf;"></div>
<div style="position:absolute;left:1226px;top:531px;width:1px;height:45px;background:#cfcfcf;"></div>
<div style="position:absolute;left:1346px;top:531px;width:1px;height:45px;background:#cfcfcf;"></div>
<div style="position:absolute;left:1466px;top:531px;width:1px;height:45px;background:#cfcfcf;"></div>
<div style="position:absolute;left:1586px;top:531px;width:1px;height:45px;background:#cfcfcf;"></div>
<div style="position:absolute;left:1706px;top:531px;width:1px;height:45px;background:#cfcfcf;"></div>
<div style="position:absolute;left:1826px;top:531px;width:1px;height:45px;background:#cfcfcf;"></div>
<div style="position:absolute;left:1946px;top:531px;width:1px;height:45px;background:#cfcfcf;"></div>
<div style="position:absolute;left:2066px;top:531px;width:1px;height:45px;background:#cfcfcf;"></div>
<div style="position:absolute;left:2186px;top:531px;width:1px;height:45px;background:#cfcfcf;"></div>
<div style="position:absolute;left:2306px;top:531px;width:1px;height:45px;background:#cfcfcf;"></div>
<div class="abs" style="left:749px;top:577px;width:1630px;height:225px;overflow:hidden;">
<div class="abs" style="left:55.9px;top:0;width:2px;height:74.5px;background:#ebebeb"></div>
<div class="abs" style="left:55.9px;top:74.5px;width:2px;height:151px;background:#eeeeee"></div>
<div class="abs" style="left:115.9px;top:0;width:2px;height:74.5px;background:#ebebeb"></div>
<div class="abs" style="left:115.9px;top:74.5px;width:2px;height:151px;background:#eeeeee"></div>
<div class="abs" style="left:175.9px;top:0;width:2px;height:74.5px;background:#ebebeb"></div>
<div class="abs" style="left:175.9px;top:74.5px;width:2px;height:151px;background:#eeeeee"></div>
<div class="abs" style="left:235.9px;top:0;width:2px;height:74.5px;background:#ebebeb"></div>
<div class="abs" style="left:235.9px;top:74.5px;width:2px;height:151px;background:#eeeeee"></div>
<div class="abs" style="left:295.9px;top:0;width:2px;height:74.5px;background:#ebebeb"></div>
<div class="abs" style="left:295.9px;top:74.5px;width:2px;height:151px;background:#eeeeee"></div>
<div class="abs" style="left:355.9px;top:0;width:2px;height:74.5px;background:#ebebeb"></div>
<div class="abs" style="left:355.9px;top:74.5px;width:2px;height:151px;background:#eeeeee"></div>
<div class="abs" style="left:415.9px;top:0;width:2px;height:74.5px;background:#ebebeb"></div>
<div class="abs" style="left:415.9px;top:74.5px;width:2px;height:151px;background:#eeeeee"></div>
<div class="abs" style="left:475.9px;top:0;width:2px;height:74.5px;background:#ebebeb"></div>
<div class="abs" style="left:475.9px;top:74.5px;width:2px;height:151px;background:#eeeeee"></div>
<div class="abs" style="left:535.9px;top:0;width:2px;height:74.5px;background:#ebebeb"></div>
<div class="abs" style="left:535.9px;top:74.5px;width:2px;height:151px;background:#eeeeee"></div>
<div class="abs" style="left:595.9px;top:0;width:2px;height:74.5px;background:#ebebeb"></div>
<div class="abs" style="left:595.9px;top:74.5px;width:2px;height:151px;background:#eeeeee"></div>
<div class="abs" style="left:655.9px;top:0;width:2px;height:74.5px;background:#ebebeb"></div>
<div class="abs" style="left:655.9px;top:74.5px;width:2px;height:151px;background:#eeeeee"></div>
<div class="abs" style="left:715.9px;top:0;width:2px;height:74.5px;background:#ebebeb"></div>
<div class="abs" style="left:715.9px;top:74.5px;width:2px;height:151px;background:#eeeeee"></div>
<div class="abs" style="left:775.9px;top:0;width:2px;height:74.5px;background:#ebebeb"></div>
<div class="abs" style="left:775.9px;top:74.5px;width:2px;height:151px;background:#eeeeee"></div>
<div class="abs" style="left:835.9px;top:0;width:2px;height:74.5px;background:#ebebeb"></div>
<div class="abs" style="left:835.9px;top:74.5px;width:2px;height:151px;background:#eeeeee"></div>
<div class="abs" style="left:895.9px;top:0;width:2px;height:74.5px;background:#ebebeb"></div>
<div class="abs" style="left:895.9px;top:74.5px;width:2px;height:151px;background:#eeeeee"></div>
<div class="abs" style="left:955.9px;top:0;width:2px;height:74.5px;background:#ebebeb"></div>
<div class="abs" style="left:955.9px;top:74.5px;width:2px;height:151px;background:#eeeeee"></div>
<div class="abs" style="left:1015.9px;top:0;width:2px;height:74.5px;background:#ebebeb"></div>
<div class="abs" style="left:1015.9px;top:74.5px;width:2px;height:151px;background:#eeeeee"></div>
<div class="abs" style="left:1075.9px;top:0;width:2px;height:74.5px;background:#ebebeb"></div>
<div class="abs" style="left:1075.9px;top:74.5px;width:2px;height:151px;background:#eeeeee"></div>
<div class="abs" style="left:1135.9px;top:0;width:2px;height:74.5px;background:#ebebeb"></div>
<div class="abs" style="left:1135.9px;top:74.5px;width:2px;height:151px;background:#eeeeee"></div>
<div class="abs" style="left:1195.9px;top:0;width:2px;height:74.5px;background:#ebebeb"></div>
<div class="abs" style="left:1195.9px;top:74.5px;width:2px;height:151px;background:#eeeeee"></div>
<div class="abs" style="left:1255.9px;top:0;width:2px;height:74.5px;background:#ebebeb"></div>
<div class="abs" style="left:1255.9px;top:74.5px;width:2px;height:151px;background:#eeeeee"></div>
<div class="abs" style="left:1315.9px;top:0;width:2px;height:74.5px;background:#ebebeb"></div>
<div class="abs" style="left:1315.9px;top:74.5px;width:2px;height:151px;background:#eeeeee"></div>
<div class="abs" style="left:1375.9px;top:0;width:2px;height:74.5px;background:#ebebeb"></div>
<div class="abs" style="left:1375.9px;top:74.5px;width:2px;height:151px;background:#eeeeee"></div>
<div class="abs" style="left:1435.9px;top:0;width:2px;height:74.5px;background:#ebebeb"></div>
<div class="abs" style="left:1435.9px;top:74.5px;width:2px;height:151px;background:#eeeeee"></div>
<div class="abs" style="left:1495.9px;top:0;width:2px;height:74.5px;background:#ebebeb"></div>
<div class="abs" style="left:1495.9px;top:74.5px;width:2px;height:151px;background:#eeeeee"></div>
<div class="abs" style="left:1555.9px;top:0;width:2px;height:74.5px;background:#ebebeb"></div>
<div class="abs" style="left:1555.9px;top:74.5px;width:2px;height:151px;background:#eeeeee"></div>
<div class="abs" style="left:1615.9px;top:0;width:2px;height:74.5px;background:#ebebeb"></div>
<div class="abs" style="left:1615.9px;top:74.5px;width:2px;height:151px;background:#eeeeee"></div>
</div>
<span class="t" style="left:1515.00px;top:501px;font-size:18px;line-height:20px;transform:scaleX(1.0924);color:#333;">08/02/2022</span>
<span class="t" style="left:783.10px;top:545px;font-size:17.3px;line-height:20px;transform:scaleX(1.1517);color:#333;">07:00</span>
<span class="t" style="left:900.70px;top:545px;font-size:17.3px;line-height:20px;letter-spacing:0.117px;transform:scaleX(1.1600);color:#333;">08:00</span>
<span class="t" style="left:1021.00px;top:545px;font-size:17.3px;line-height:20px;letter-spacing:0.074px;transform:scaleX(1.1600);color:#333;">09:00</span>
<span class="t" style="left:1141.91px;top:545px;font-size:17.3px;line-height:20px;transform:scaleX(1.0904);color:#333;">10:00</span>
<span class="t" style="left:1264.61px;top:545px;font-size:17.3px;line-height:20px;transform:scaleX(0.9863);color:#333;">11:00</span>
<span class="t" style="left:1382.54px;top:545px;font-size:17.3px;line-height:20px;transform:scaleX(1.0592);color:#333;">12:00</span>
<span class="t" style="left:1502.55px;top:545px;font-size:17.3px;line-height:20px;transform:scaleX(1.0544);color:#333;">13:00</span>
<span class="t" style="left:1621.60px;top:545px;font-size:17.3px;line-height:20px;transform:scaleX(1.0953);color:#333;">14:00</span>
<span class="t" style="left:1742.44px;top:545px;font-size:17.3px;line-height:20px;transform:scaleX(1.0592);color:#333;">15:00</span>
<span class="t" style="left:1861.92px;top:545px;font-size:17.3px;line-height:20px;transform:scaleX(1.0784);color:#333;">16:00</span>
<span class="t" style="left:1982.24px;top:545px;font-size:17.3px;line-height:20px;transform:scaleX(1.0592);color:#333;">17:00</span>
<span class="t" style="left:2101.92px;top:545px;font-size:17.3px;line-height:20px;transform:scaleX(1.0832);color:#333;">18:00</span>
<span class="t" style="left:2222.23px;top:545px;font-size:17.3px;line-height:20px;transform:scaleX(1.0736);color:#333;">19:00</span>
<span class="t" style="left:2317.70px;top:545px;font-size:17.3px;line-height:20px;transform:scaleX(1.1587);color:#333;">20:00</span>
<svg style="left:386px;top:603px" width="22" height="22" viewBox="386 603 22 22" ><rect x="389.05" y="606.25" width="16.3" height="15.7" fill="#fff" stroke="#333" stroke-width="1.7"/><rect x="392.6" y="613.1" width="9.5" height="1.7" fill="#333"/></svg>
<span class="t" style="left:421.82px;top:605px;font-size:17.9px;line-height:20px;transform:scaleX(1.0769);font-weight:700;color:#333;">Field workers out of sector</span>
<svg style="left:384px;top:676.3px" width="28" height="28" viewBox="384 676.3 28 28" ><rect x="387.35" y="679.4499999999999" width="21.3" height="21.3" rx="1.8" fill="#fff" stroke="#6e6e6e" stroke-width="1.9"/></svg>
<span class="t" style="left:430.30px;top:679px;font-size:17.8px;line-height:20px;letter-spacing:0.300px;transform:scaleX(1.1000);color:#333;">Sam Williams</span>
<div style="position:absolute;left:705.7px;top:690.7px;width:4.2px;height:4.2px;border-radius:50%;background:#222;"></div>
<div style="position:absolute;left:716.9px;top:690.7px;width:4.2px;height:4.2px;border-radius:50%;background:#222;"></div>
<div style="position:absolute;left:728.1px;top:690.7px;width:4.2px;height:4.2px;border-radius:50%;background:#222;"></div>
<svg style="left:384px;top:751.3px" width="28" height="28" viewBox="384 751.3 28 28" ><rect x="387.35" y="754.4499999999999" width="21.3" height="21.3" rx="1.8" fill="#fff" stroke="#6e6e6e" stroke-width="1.9"/></svg>
<span class="t" style="left:430.30px;top:754px;font-size:17.8px;line-height:20px;letter-spacing:0.356px;transform:scaleX(1.1000);color:#333;">Stella Dupont</span>
<div style="position:absolute;left:705.7px;top:765.7px;width:4.2px;height:4.2px;border-radius:50%;background:#222;"></div>
<div style="position:absolute;left:716.9px;top:765.7px;width:4.2px;height:4.2px;border-radius:50%;background:#222;"></div>
<div style="position:absolute;left:728.1px;top:765.7px;width:4.2px;height:4.2px;border-radius:50%;background:#222;"></div>
<div style="position:absolute;left:749px;top:652px;width:117.5px;height:68px;background-image:linear-gradient(45deg,rgba(0,0,0,.1) 25%,transparent 25%,transparent 50%,rgba(0,0,0,.1) 50%,rgba(0,0,0,.1) 75%,transparent 75%);background-size:21.2px 21.2px;background-position:12.8px 0;"></div>
<div style="position:absolute;left:1947px;top:652px;width:432px;height:68px;background-image:linear-gradient(45deg,rgba(0,0,0,.1) 25%,transparent 25%,transparent 50%,rgba(0,0,0,.1) 50%,rgba(0,0,0,.1) 75%,transparent 75%);background-size:21.2px 21.2px;background-position:6.8px 0;"></div>
<svg style="left:750px;top:688px" width="10" height="16" viewBox="0 0 10 16"><path d="M1.4 6.6 L7.5 2.2 V14.6 Z" fill="rgba(0,0,0,.07)"/></svg>
<div class="abs" style="left:0;top:652px;width:2409px;height:68px;">
<div class="brk" style="left:1332.5px;width:36.5px"></div>
<svg style="left:1332.5px;top:20px" width="30" height="24" viewBox="1332.5 672 30 24"><path d="M1339.4 678.9 H1353.6" fill="none" stroke="#0b6bb5" stroke-width="1.7" /><path d="M1340.0 678.9 L1341.4 690.6 Q1341.7 692.9 1343.9 692.9 H1349.0 Q1351.1 692.9 1351.4 690.6 L1352.8 678.9" fill="none" stroke="#0b6bb5" stroke-width="1.7" /><path d="M1352.5 682.5 H1353.8 Q1356.5 682.7 1356.4 685.2 Q1356.3 687.8 1353.5 687.9 H1352.0" fill="none" stroke="#0b6bb5" stroke-width="1.6" /><line x1="1344.7" y1="674.3" x2="1344.7" y2="676.7" fill="none" stroke="#0b6bb5" stroke-width="1.8" /><line x1="1347.7" y1="675.2" x2="1347.7" y2="676.7" fill="none" stroke="#0b6bb5" stroke-width="1.8" /></svg>
<div class="task" style="left:871px;width:41.0px"><b>Roche</b></div>
<div class="task" style="left:912px;width:40.0px"><b>Dupont</b></div>
<div class="task" style="left:952px;width:40.2px"><b>Dupuis</b></div>
<div class="task" style="left:998.2px;width:40.8px"><b>Petit</b></div>
<div class="task" style="left:1042px;width:38.7px"><b>Wagner</b></div>
<div class="task" style="left:1082.8px;width:39.0px"><b>Wagner</b></div>
<div class="task" style="left:1121.8px;width:39.9px"><b>Martin</b></div>
<div class="task" style="left:1163.5px;width:40.5px"><b>Roche</b></div>
<div class="task" style="left:1205.9px;width:40.1px"><b>Ahmed</b></div>
<div class="task" style="left:1247.6px;width:40.7px"><b>Charles</b></div>
<div class="task" style="left:1288.3px;width:44.2px;padding-right:4.5px"><b>Jean</b></div>
<div class="task" style="left:1369px;width:38.8px"><b>Jean</b></div>
<div class="task" style="left:1409px;width:82.1px;letter-spacing:1.75px"><b>Ben Amar</b></div>
<div class="task" style="left:1491.1px;width:39.6px"><b>Bernard</b></div>
<div class="task" style="left:1532.7px;width:40.6px"><b>Pierre</b></div>
<div class="task" style="left:1573.3px;width:39.9px"><b>Brice</b></div>
<div class="task" style="left:1615.2px;width:38.8px"><b>Brice</b></div>
<div class="task" style="left:1654px;width:39.9px"><b>Pierre</b></div>
<div class="task" style="left:1693.9px;width:41.2px"><b>Martin</b></div>
<div class="task" style="left:1735.1px;width:40.9px"><b>Roche</b></div>
<div class="task" style="left:1780.2px;width:78.8px;letter-spacing:1.95px"><b>Dupont L</b></div>
<div class="task" style="left:1859px;width:41.0px"><b>Georges</b></div>
<div class="lnk" style="left:852.8px;width:18.2px"></div>
<div class="lnk" style="left:1896.5px;width:25.2px"></div>
<div class="lnk" style="left:988.7px;width:9.5px"></div>
<div class="lnk" style="left:1772.5px;width:7.7px"></div>
<div class="dot" style="left:840.3px"></div><div class="dot" style="left:1909.2px"></div>
</div>
<div style="position:absolute;left:749px;top:727px;width:117.5px;height:68px;background-image:linear-gradient(45deg,rgba(0,0,0,.1) 25%,transparent 25%,transparent 50%,rgba(0,0,0,.1) 50%,rgba(0,0,0,.1) 75%,transparent 75%);background-size:21.2px 21.2px;background-position:12.8px 0;"></div>
<div style="position:absolute;left:1947px;top:727px;width:432px;height:68px;background-image:linear-gradient(45deg,rgba(0,0,0,.1) 25%,transparent 25%,transparent 50%,rgba(0,0,0,.1) 50%,rgba(0,0,0,.1) 75%,transparent 75%);background-size:21.2px 21.2px;background-position:6.8px 0;"></div>
<svg style="left:750px;top:763px" width="10" height="16" viewBox="0 0 10 16"><path d="M1.4 6.6 L7.5 2.2 V14.6 Z" fill="rgba(0,0,0,.07)"/></svg>
<div class="abs" style="left:0;top:727px;width:2409px;height:68px;">
<div class="brk" style="left:1452.6px;width:55.5px"></div>
<svg style="left:1452.6px;top:20px" width="30" height="24" viewBox="1452.6 672 30 24"><path d="M1459.5 678.9 H1473.6999999999998" fill="none" stroke="#0b6bb5" stroke-width="1.7" /><path d="M1460.1 678.9 L1461.5 690.6 Q1461.8 692.9 1464.0 692.9 H1469.1 Q1471.1999999999998 692.9 1471.5 690.6 L1472.8999999999999 678.9" fill="none" stroke="#0b6bb5" stroke-width="1.7" /><path d="M1472.6 682.5 H1473.8999999999999 Q1476.6 682.7 1476.5 685.2 Q1476.3999999999999 687.8 1473.6 687.9 H1472.1" fill="none" stroke="#0b6bb5" stroke-width="1.6" /><line x1="1464.8" y1="674.3" x2="1464.8" y2="676.7" fill="none" stroke="#0b6bb5" stroke-width="1.8" /><line x1="1467.8" y1="675.2" x2="1467.8" y2="676.7" fill="none" stroke="#0b6bb5" stroke-width="1.8" /></svg>
<div class="task" style="left:869px;width:41.0px"><b>Petit</b></div>
<div class="task" style="left:914.1px;width:39.0px"><b>Charles</b></div>
<div class="task" style="left:957.1px;width:38.8px"><b>Grand</b></div>
<div class="task" style="left:995.9px;width:40.0px"><b>Roche</b></div>
<div class="task" style="left:1041.1px;width:38.0px"><b>Dupont</b></div>
<div class="task" style="left:1079.1px;width:40.9px"><b>Picard</b></div>
<div class="task" style="left:1121.8px;width:39.9px"><b>Martin</b></div>
<div class="task" style="left:1163.5px;width:40.5px"><b>Laurent</b></div>
<div class="task" style="left:1208.4px;width:39.2px"><b>Pierre</b></div>
<div class="task" style="left:1247.6px;width:40.7px"><b>Brice</b></div>
<div class="task" style="left:1288.3px;width:39.9px"><b>Brice</b></div>
<div class="task" style="left:1328.2px;width:39.3px"><b>Georges</b></div>
<div class="task" style="left:1367.5px;width:40.8px"><b>Pierre</b></div>
<div class="task" style="left:1408.3px;width:44.3px;padding-right:4.5px"><b>Georges</b></div>
<div class="task" style="left:1512px;width:39.9px"><b>Durand</b></div>
<div class="task y" style="left:1553.4px;width:80.7px;letter-spacing:0.75px"><b>Doe Léa L</b></div>
<div class="task" style="left:1634.1px;width:79.8px;letter-spacing:1.55px"><b>Dumont L</b></div>
<div class="task" style="left:1718.3px;width:39.2px"><b>Doe</b></div>
<div class="task" style="left:1757.5px;width:80.8px;letter-spacing:1.45px"><b>Laurent P</b></div>
<div class="task" style="left:1838.3px;width:39.0px"><b>Smith</b></div>
<div class="task" style="left:1881px;width:38.0px"><b>Picard</b></div>
<div class="lnk" style="left:852.8px;width:16.2px"></div>
<div class="lnk" style="left:1915.5px;width:25.7px"></div>
<div class="lnk" style="left:906.5px;width:7.6px"></div>
<div class="lnk" style="left:949.6px;width:7.5px"></div>
<div class="lnk" style="left:1032.4px;width:8.7px"></div>
<div class="lnk" style="left:1200.5px;width:7.9px"></div>
<div class="lnk" style="left:1508.1px;width:3.9px"></div>
<div class="lnk" style="left:1710.4px;width:7.9px"></div>
<div class="lnk" style="left:1873.8px;width:7.2px"></div>
<div class="dot" style="left:840.3px"></div><div class="dot" style="left:1928.7px"></div>
</div>
</section>
<button title="Chat" style="position:absolute;left:2291px;top:1258px;width:90px;height:90px;border-radius:50%;background:#0b55fb;box-shadow:0 2px 30px rgba(0,0,0,.17);">
<svg style="left:19px;top:20px" width="52" height="50" viewBox="2310 1278 52 50" ><path d="M2318.5 1287.6 C2326 1286.6 2340 1286.6 2347 1287.6 Q2352.3 1288.4 2352.6 1293.5 C2353 1299 2353 1306 2352.4 1311.5 Q2351.8 1316.6 2346.5 1317.2 L2338.8 1317.9 L2332.8 1325.2 L2328.3 1317.9 L2319 1317.2 Q2313.8 1316.6 2313.3 1311.5 C2312.6 1306 2312.6 1299 2313.1 1293.5 Q2313.5 1288.3 2318.5 1287.6 Z" fill="#fff"/><path d="M2321.5 1284 C2332 1280.3 2347 1280.2 2355 1281.8 Q2358.3 1282.6 2358.6 1287 C2359.3 1294 2359 1303 2357 1309.6 L2355.2 1310.3 C2356.3 1303 2356.3 1296 2355.4 1290.3 Q2354.6 1284.6 2349 1284 C2341 1282.8 2330 1282.9 2321.5 1284 Z" fill="#fff"/></svg>
</button>
</div></div>
</body></html>
